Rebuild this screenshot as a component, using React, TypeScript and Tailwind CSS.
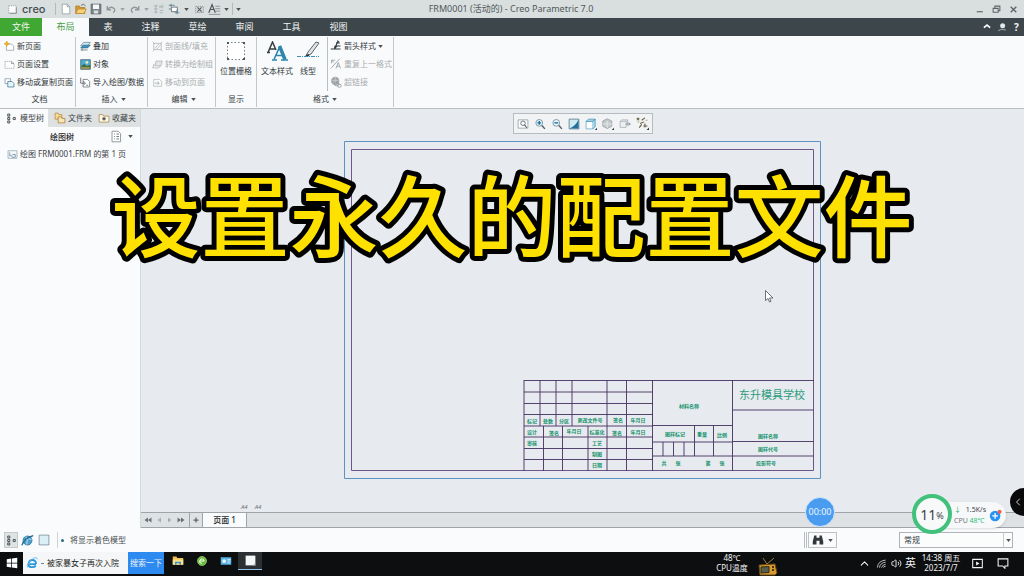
import type { ReactNode } from 'react';
import { ChevronLeft, ChevronUp, Volume2 } from 'lucide-react';

interface IconProps {
  children: ReactNode;
  size?: number;
  box?: number;
}

// All hand-drawn icons share a 16 unit grid
function Icon({ children, size = 11, box = 16 }: IconProps) {
  return (
    <svg width={size} height={size} viewBox={`0 0 ${box} ${box}`} fill="none" stroke="#5b6468" className="shrink-0" aria-hidden="true">
      {children}
    </svg>
  );
}

function Caret({ color = '#4a5053' }: { color?: string }) {
  return (
    <svg width="5" height="3" viewBox="0 0 6 4" className="shrink-0" aria-hidden="true">
      <path d="M0 0h6L3 4z" fill={color} />
    </svg>
  );
}

const icons = {
  page: (
    <Icon>
      <path d="M2.500 2.500h11v11h-11z" fill="#fbfbfb" stroke="#8d979c" strokeDasharray="2 1" />
      <path d="M4 13.500h9.500V5" stroke="#6c767b" />
    </Icon>
  ),
  newFile: (
    <Icon size={12}>
      <path d="M3 1.500h6.500L13 5v9.500H3z" fill="#fff" stroke="#8b9499" />
      <path d="M9.500 1.500V5H13" stroke="#8b9499" />
    </Icon>
  ),
  open: (
    <Icon size={12}>
      <path d="M1 4h5l1 2h6v8H1z" fill="#d69a35" stroke="#a87821" />
      <path d="M1 14l3-6h11l-3 6z" fill="#f7d078" stroke="#b58630" />
      <path d="M8 3q4-3 6 1" stroke="#4c5254" />
    </Icon>
  ),
  save: (
    <Icon size={12}>
      <path d="M1.500 1.500h13v13h-13z" fill="#7b858b" stroke="#535d62" />
      <path d="M4 2h8v6H4z" fill="#f4f6f7" stroke="none" />
      <path d="M5 10h6v4H5z" fill="#d9dee0" stroke="none" />
    </Icon>
  ),
  undo: (
    <Icon size={12}>
      <path d="M3 4v5h5M3 9q4-5 8-2.500t0 6.500" stroke="#8e979b" strokeWidth="1.800" />
    </Icon>
  ),
  redo: (
    <Icon size={12}>
      <path d="M13 4v5H8M13 9q-4-5-8-2.500t0 6.500" stroke="#8e979b" strokeWidth="1.800" />
    </Icon>
  ),
  regen: (
    <Icon size={12}>
      <path d="M4 2v12M1 4h5M1 8h5M1 12h5" stroke="#a2aaad" />
      <path d="M8 4h3v3M11 4l-3 3M13 2v5M9 10h5M9 13h4" stroke="#a2aaad" />
    </Icon>
  ),
  windows: (
    <Icon size={12}>
      <path d="M4.500 5.500h8v6h-8z" fill="#fff" stroke="#4f5a5f" />
      <path d="M1 3h8M4 1v4M12 9v6M9 13h6M1 8h3" stroke="#48718c" />
    </Icon>
  ),
  close: (
    <Icon size={11}>
      <path d="M2.500 3.500h11v9h-11z" stroke="#737d82" strokeDasharray="2 1" />
      <path d="M5 5l6 6M11 5l-6 6" stroke="#4f595e" strokeWidth="1.600" />
    </Icon>
  ),
  textFormat: (
    <Icon size={13}>
      <path d="M1 12L5 2l4 10M3 8h4" stroke="#4d575c" strokeWidth="1.500" />
      <path d="M9 4h6M9 7h6M9 10h6M1 14h14" stroke="#7e888c" />
    </Icon>
  ),
  newPage: (
    <Icon>
      <path d="M3.500 4.500H11l3 3v6H3.500z" fill="#fff" stroke="#8c969b" />
      <path d="M4 0l1 3 3 1-3 1-1 3-1-3-3-1 3-1z" fill="#f2b524" stroke="#e0a010" />
    </Icon>
  ),
  pageSetup: (
    <Icon>
      <path d="M1.500 3.500H11l3.500 3v7h-13z" fill="#fff" stroke="#8c969b" strokeDasharray="2 1" />
      <path d="M11 3.500v3h3.500" stroke="#6f7a80" />
    </Icon>
  ),
  movePage: (
    <Icon>
      <path d="M1.500 2.500h8v7h-8z" fill="#fff" stroke="#708c9c" />
      <path d="M5.500 6.500h6l3 3v5h-9z" fill="#e6f5fc" stroke="#356d8b" />
    </Icon>
  ),
  overlay: (
    <Icon>
      <path d="M5 2h10l-4 5H1z" fill="#d7e8f0" stroke="#547c91" />
      <path d="M5 6h10l-4 4H1z" fill="#3f96be" stroke="#2c6986" />
      <path d="M1 13h10M3 10v4" stroke="#566269" />
    </Icon>
  ),
  picture: (
    <Icon>
      <path d="M1 1h14v14H1z" fill="#4cafd6" stroke="#3c5058" />
      <path d="M2 10l4-3 4 3 5-2v6H2z" fill="#426e43" stroke="none" />
      <path d="M2 12h12v2H2z" fill="#c69c49" stroke="none" />
      <circle cx="10" cy="5" r="2" fill="#f6e5a2" stroke="none" />
    </Icon>
  ),
  importData: (
    <Icon>
      <path d="M4.500 3.500H11l3 3v8H4.500z" fill="#fff" stroke="#535e63" />
      <path d="M1 1v8h6M5 6l3 3-3 3M9 12h3" stroke="#3e494e" />
    </Icon>
  ),
  hatch: (
    <Icon>
      <path d="M2.500 3.500h11v9h-11z" stroke="#a9aeb1" />
      <path d="M1 1l3 3M15 1l-3 3M1 15l3-3M15 15l-3-3M4 11l6-7M7 12l6-7" stroke="#a9aeb1" />
    </Icon>
  ),
  convert: (
    <Icon>
      <path d="M6 3h9l-2 7H4z" fill="#e4e6e7" stroke="#a9aeb1" />
      <path d="M3 7L1 13h9l2-3" stroke="#a9aeb1" />
    </Icon>
  ),
  moveTo: (
    <Icon>
      <path d="M2.500 3.500H11l3 3v7H2.500z" stroke="#b0b5b8" />
      <path d="M4 9h6M8 6.500L10.500 9 8 11.500" stroke="#969da0" />
    </Icon>
  ),
  arrowStyle: (
    <Icon size={12}>
      <path d="M1 12h5l4-9M6 12h8M6 8h8M8 4h5" stroke="#2e383c" strokeWidth="1.400" />
      <path d="M10 0l3 3-4 1zM5 9l5-1-3 4z" fill="#2e383c" stroke="none" />
    </Icon>
  ),
  repeatFormat: (
    <Icon size={12}>
      <path d="M1 14L13 1M2 3h5M2 3v4M2 3l3 3M8 14l3-8 3 8M9 11h4" stroke="#9ca3a6" strokeWidth="1.200" />
    </Icon>
  ),
  link: (
    <Icon size={12}>
      <circle cx="7" cy="6.500" r="5" fill="#a4aaac" stroke="#9ca2a5" />
      <path d="M3 6h8M7 2v9" stroke="#c6cacc" />
      <rect x="6" y="9" width="6" height="4" rx="2" stroke="#8b9396" />
      <rect x="10" y="11" width="5" height="4" rx="2" stroke="#8b9396" />
    </Icon>
  ),
  modelTree: (
    <Icon>
      <path d="M2.500 1.500h3v3h-3zM2.500 6.500h3v3h-3zM2.500 11.500h3v3h-3zM10.500 6.500h3v3h-3z" stroke="#3b4448" strokeWidth="1.300" />
    </Icon>
  ),
  folders: (
    <Icon size={12}>
      <path d="M1.500 1.500h4l1 2h4v6h-9z" fill="#f6dc9b" stroke="#b58734" />
      <path d="M5.500 6.500h4l1 2h4v6h-9z" fill="#f8e6b8" stroke="#a97b2b" />
    </Icon>
  ),
  favorites: (
    <Icon size={12}>
      <path d="M1.500 3.500h5l1 2h7v8h-13z" fill="#fdf6e2" stroke="#a98649" />
      <path d="M8 6.500v5M5.500 9h5M6.500 7.500l3 3M9.500 7.500l-3 3" stroke="#2d3538" />
    </Icon>
  ),
  treeList: (
    <Icon size={13}>
      <path d="M2.500 1.500H10l3 3v10H2.500z" fill="#fff" stroke="#7b858a" />
      <path d="M5 5h1M8 5h3M5 8h1M8 8h3M5 11h1M8 11h3" stroke="#4c575c" />
    </Icon>
  ),
  drawing: (
    <Icon>
      <path d="M1.500 2.500h13v11h-13z" fill="#f4f8fa" stroke="#8ba0ac" />
      <path d="M4 5v5h4M8 8h4v4H7" stroke="#54788b" />
    </Icon>
  ),
};

const viewIcons = [
  {
    label: '重新调整',
    art: (
      <Icon size={12}>
        <path d="M1.500 2.500h13v11h-13z" fill="#fff" stroke="#8b959a" />
        <circle cx="8" cy="7" r="3" stroke="#4a5357" />
        <path d="M10 9l3 4" stroke="#4a5357" strokeWidth="1.500" />
      </Icon>
    ),
  },
  {
    label: '放大',
    art: (
      <Icon size={12}>
        <circle cx="7" cy="6.500" r="4.500" fill="#e5f5fb" stroke="#66828f" />
        <path d="M4.500 6.500h5M7 4v5" stroke="#176da0" strokeWidth="1.800" />
        <path d="M10.500 10l4 4.500" stroke="#566369" strokeWidth="2" />
      </Icon>
    ),
  },
  {
    label: '缩小',
    art: (
      <Icon size={12}>
        <circle cx="7" cy="6.500" r="4.500" fill="#e5f5fb" stroke="#66828f" />
        <path d="M4.500 6.500h5" stroke="#176da0" strokeWidth="1.800" />
        <path d="M10.500 10l4 4.500" stroke="#566369" strokeWidth="2" />
      </Icon>
    ),
  },
  {
    label: '重画',
    art: (
      <Icon size={12}>
        <path d="M1.500 1.500h13v13h-13z" fill="#cfeaf4" stroke="#547080" />
        <path d="M14 2v12H2q8-3 12-12z" fill="#23709a" stroke="none" />
      </Icon>
    ),
  },
  {
    label: '显示样式',
    art: (
      <Icon size={12}>
        <path d="M1.500 4.500h9v10h-9z" fill="#fff" stroke="#5ca3c3" />
        <path d="M1.500 4.500l3-3h9l-3 3zM10.500 4.500l3-3v10l-3 3" fill="#a9dced" stroke="#4690b2" />
        <path d="M16 13v3h-3z" fill="#2f383c" stroke="none" />
      </Icon>
    ),
  },
  {
    label: '着色',
    art: (
      <Icon size={12}>
        <path d="M7 1l6 3v7l-6 3-6-3V4z" fill="#c4c9cb" stroke="#959c9f" />
        <path d="M1 8h12M7 4v9" stroke="#eef0f0" />
        <path d="M16 13v3h-3z" fill="#2f383c" stroke="none" />
      </Icon>
    ),
  },
  {
    label: '视图方向',
    art: (
      <Icon size={12}>
        <path d="M1.500 4.500h8v8h-8zM1.500 4.500l2-2h8l-2 2M11.500 2.500v8" fill="#edf0f1" stroke="#a4acaf" />
        <path d="M9 8h6M13 6l2 2-2 2" stroke="#727c80" />
      </Icon>
    ),
  },
  {
    label: '注释显示',
    art: (
      <Icon size={13}>
        <path d="M1 1l3 3M4 1L1 4M7 4l4-3M5 8l5-2M4 13l3-4M9 11h5M11 8v5" stroke="#665f43" strokeWidth="1.300" />
        <path d="M2 6h2M12 4h2" stroke="#a78531" />
        <path d="M16 13v3h-3z" fill="#2f383c" stroke="none" />
      </Icon>
    ),
  },
];

const tabs = ['注释', '草绘', '审阅', '工具', '视图'];

interface RibbonButtonProps {
  icon: ReactNode;
  label: string;
  disabled?: boolean;
  menu?: boolean;
}

function RibbonButton({ icon, label, disabled = false, menu = false }: RibbonButtonProps) {
  return (
    <button
      type="button"
      disabled={disabled}
      className={`flex h-[18px] items-center gap-[2px] whitespace-nowrap text-[8px] ${disabled ? 'text-[#a9adb0]' : 'text-[#33393c]'}`}
    >
      {icon}
      {label}
      {menu && <Caret />}
    </button>
  );
}

function RibbonGroup({ title, menu = false, width, children }: { title: string; menu?: boolean; width: string; children: ReactNode }) {
  return (
    <section className={`flex shrink-0 flex-col border-r border-[#c3c7ca] ${width}`}>
      <div className="h-[54px]">{children}</div>
      <div className="flex h-4 items-center justify-center gap-[3px] text-[8px] text-[#33393c]">
        {title}
        {menu && <Caret />}
      </div>
    </section>
  );
}

function TitleBar() {
  return (
    <header className="flex h-[18px] shrink-0 items-center bg-[#d9dfdf] text-[#3d4548]">
      <div className="flex flex-1 items-center">
        <div className="flex w-[58px] items-center gap-1 pl-[7px]">
          {icons.page}
          <span className="font-['Inter',sans-serif] text-[11px] font-medium leading-4 text-[#454d51]">creo</span>
          <span className="ml-auto mr-[2px] h-3 w-px bg-[#b3babb]" />
        </div>
        {[
          ['新建', icons.newFile],
          ['打开', icons.open],
          ['保存', icons.save],
          ['撤消', icons.undo],
        ].map(([label, art]) => (
          <button key={label as string} type="button" aria-label={label as string} className="flex w-[15px] justify-center">{art}</button>
        ))}
        <span className="flex w-[9px] justify-center"><Caret color="#9aa2a4" /></span>
        <button type="button" aria-label="重做" className="flex w-[15px] justify-center">{icons.redo}</button>
        <span className="flex w-[9px] justify-center"><Caret color="#9aa2a4" /></span>
        <button type="button" aria-label="重新生成" className="flex w-[15px] justify-center">{icons.regen}</button>
        <button type="button" aria-label="窗口" className="flex w-[15px] justify-center">{icons.windows}</button>
        <span className="flex w-[11px] justify-center"><Caret /></span>
        <button type="button" aria-label="关闭窗口" className="flex w-[15px] justify-center">{icons.close}</button>
        <button type="button" aria-label="文本格式" className="flex w-[15px] justify-center">{icons.textFormat}</button>
        <span className="flex w-[9px] justify-center"><Caret /></span>
        <span className="mx-px h-3 w-px bg-[#b3babb]" />
        <button type="button" aria-label="自定义工具栏" className="flex w-[9px] justify-center"><Caret /></button>
      </div>
      <h1 className="whitespace-nowrap text-[9px] text-[#50585b]">FRM0001 (活动的) - Creo Parametric 7.0</h1>
      <div className="flex flex-1 justify-end pr-[2px]">
        <button type="button" aria-label="最小化" className="flex w-[17px] justify-center">
          <Icon size={9}><path d="M3 12h11" strokeWidth="2" /></Icon>
        </button>
        <button type="button" aria-label="还原" className="flex w-[17px] justify-center">
          <Icon size={9}><path d="M2 6h9v7H2zM5 6V2h9v8h-3" strokeWidth="1.800" /></Icon>
        </button>
        <button type="button" aria-label="关闭" className="flex w-[17px] justify-center">
          <Icon size={9}><path d="M3 3l10 10M13 3L3 13" strokeWidth="2.400" /></Icon>
        </button>
      </div>
    </header>
  );
}

function TabBar() {
  return (
    <nav className="flex h-[18px] shrink-0 items-stretch bg-[#3d474b] text-[9px] text-[#f1f4f4]">
      <button type="button" className="w-[42px] bg-[#40a832]">文件</button>
      <button type="button" className="w-[47px] bg-[#f8fafb] text-[#4c9c48]">布局</button>
      <button type="button" className="w-[38px]">表</button>
      {tabs.map((tab) => (
        <button key={tab} type="button" className="w-[47px]">{tab}</button>
      ))}
      <div className="ml-auto flex items-center">
        <button type="button" aria-label="折叠功能区" className="flex w-[15px] justify-center">
          <Icon size={10}><path d="M3 9l5-4 5 4" stroke="#fff" strokeWidth="2.600" /></Icon>
        </button>
        <button type="button" aria-label="账户" className="flex w-[15px] justify-center">
          <Icon size={10}>
            <circle cx="9" cy="6" r="4" fill="#e3e8e8" stroke="none" />
            <path d="M2 14q5-4 12-1" stroke="#8d999c" strokeWidth="2" />
          </Icon>
        </button>
        <button type="button" aria-label="帮助" className="w-[15px] text-[10px] font-bold">?</button>
      </div>
    </nav>
  );
}

function Ribbon() {
  return (
    <div className="flex h-[73px] shrink-0 border-b border-[#b9bec1] bg-[#f8fafb] pb-px pt-px">
      <RibbonGroup title="文档" width="w-[76px] pl-1">
        <RibbonButton icon={icons.newPage} label="新页面" />
        <RibbonButton icon={icons.pageSetup} label="页面设置" />
        <RibbonButton icon={icons.movePage} label="移动或复制页面" />
      </RibbonGroup>
      <RibbonGroup title="插入" menu width="w-[72px] pl-1">
        <RibbonButton icon={icons.overlay} label="叠加" />
        <RibbonButton icon={icons.picture} label="对象" />
        <RibbonButton icon={icons.importData} label="导入绘图/数据" />
      </RibbonGroup>
      <RibbonGroup title="编辑" menu width="w-[68px] pl-1">
        <RibbonButton icon={icons.hatch} label="剖面线/填充" disabled />
        <RibbonButton icon={icons.convert} label="转换为绘制组" disabled />
        <RibbonButton icon={icons.moveTo} label="移动到页面" disabled />
      </RibbonGroup>
      <RibbonGroup title="显示" width="w-[41px]">
        <button type="button" className="flex w-full flex-col items-center gap-1 whitespace-nowrap pt-1 text-[8px] text-[#33393c]">
          <Icon size={20} box={20}>
            <path d="M1.500 1.500h17v17h-17z" fill="#fff" stroke="#777f83" strokeDasharray="1.500 2" />
            <path d="M1 1h2v2H1zM17 1h2v2h-2zM1 17h2v2H1zM17 17h2v2h-2z" fill="#4b5458" stroke="none" />
          </Icon>
          位置栅格
        </button>
      </RibbonGroup>
      <RibbonGroup title="格式" menu width="w-[137px]">
        <div className="flex">
          <button type="button" className="flex w-[40px] flex-col items-center gap-[2px] whitespace-nowrap pt-1 text-[8px] text-[#33393c]">
            <Icon size={22} box={22}>
              <path d="M2 11.500L6.500 1 10 9M4 8h5M1 11.500h3" stroke="#363f43" strokeWidth="1.500" />
              <path d="M8 18.500L14 5M10.500 14.500h7" stroke="#2c86ab" strokeWidth="1.600" />
              <path d="M13.500 5l5.500 13.500" stroke="#2c86ab" strokeWidth="3.500" />
              <path d="M6 19h5M15 19h7" stroke="#2c86ab" strokeWidth="1.500" />
            </Icon>
            文本样式
          </button>
          <button type="button" className="flex w-[22px] flex-col items-center gap-[2px] whitespace-nowrap pt-1 text-[8px] text-[#33393c]">
            <Icon size={22} box={22}>
              <path d="M11 11L19 1l3 1-8 11-5 2z" fill="#e1e5e7" stroke="#596368" />
              <path d="M9 15l3-1" stroke="#2f383c" strokeWidth="2" />
              <path d="M0 15.500h22" stroke="#3790b5" strokeWidth="1.200" strokeDasharray="4 1 1 1" />
            </Icon>
            线型
          </button>
          <div className="ml-2 border-l border-[#b9bec1] pl-[2px]">
            <RibbonButton icon={icons.arrowStyle} label="箭头样式" menu />
            <RibbonButton icon={icons.repeatFormat} label="重复上一格式" disabled />
            <RibbonButton icon={icons.link} label="超链接" disabled />
          </div>
        </div>
      </RibbonGroup>
    </div>
  );
}

function Sidebar() {
  return (
    <aside className="flex w-[141px] shrink-0 flex-col border-r border-[#d3d8da] bg-[#fafbfc] text-[8px] text-[#3b4245]">
      <div className="flex h-[18px] shrink-0 bg-[#dde1e1]">
        <button type="button" className="flex w-12 items-center gap-[3px] whitespace-nowrap bg-[#fafbfc] pl-[6px]">
          {icons.modelTree}模型树
        </button>
        <button type="button" className="flex w-[46px] items-center gap-[2px] whitespace-nowrap pl-[6px]">
          {icons.folders}文件夹
        </button>
        <button type="button" className="flex flex-1 items-center gap-[2px] whitespace-nowrap pl-1">
          {icons.favorites}收藏夹
        </button>
      </div>
      <div className="flex h-[19px] shrink-0 items-center">
        <h2 className="flex-1 pl-[14px] text-center font-medium text-[#1f2527]">绘图树</h2>
        <button type="button" aria-label="树设置" className="flex items-center gap-[5px] pr-[7px]">
          {icons.treeList}
          <Caret />
        </button>
      </div>
      <button type="button" className="flex h-4 items-center gap-[2px] whitespace-nowrap pl-[7px]">
        {icons.drawing}绘图 FRM0001.FRM 的第 1 页
      </button>
    </aside>
  );
}

// Title block labels: x (centre), baseline, text
const blockLabels: [number, number, string][] = [
  [188, 282, '标记'], [204, 282, '处数'], [220, 282, '分区'], [246, 281, '更改文件号'], [274, 281, '签名'], [294, 281, '年月日'],
  [188, 293, '设计'], [210, 294, '签名'], [230, 292, '年月日'], [253, 293, '标准化'], [273, 294, '签名'], [294, 293, '年月日'],
  [188, 304, '审核'], [253, 304, '工艺'], [253, 315, '制图'], [253, 326, '日期'],
  [345, 267, '材料名称'], [331, 295, '图样标记'], [358, 295, '重量'], [378, 296, '比例'],
  [320, 324, '共'], [334, 324, '张'], [364, 324, '第'], [378, 324, '张'],
  [424, 297, '图样名称'], [424, 310, '图样代号'], [422, 324, '投影符号'],
];

const blockLines =
  'M180 239.500h290M180 251h129M180 262.500h129M180 273.500h129M180 285h129M180 296h129M180 307.500h129M180 318.500h129' +
  'M180 239v91M196 239v46M212 239v46M228 239v46M263 239v91M282.500 239v91M308.500 239v91' +
  'M199.500 285v45M218.500 285v45M244 285v45' +
  'M308.500 284.500h80M308.500 301h80M308.500 315h80M350.500 284.500v30.500M369.500 284.500v30.500M319 301v14M329.500 301v14M340 301v14' +
  'M388.500 239v91M388.500 269h81M388.500 300.500h81M388.500 315h81';

function DrawingSheet() {
  return (
    <svg width="478" height="339" viewBox="0 0 478 339" className="mt-[7px] shrink-0" role="img" aria-label="FRM0001 图框">
      <path d="M.5.5h476v337H.5z" fill="none" stroke="#5f92c4" />
      <path d="M7.500 8.500h462v321h-462z" fill="none" stroke="#6d5489" />
      <path d={blockLines} fill="none" stroke="#44305f" strokeWidth=".9" />
      <g fill="#13926c" fontSize="5" fontWeight="700" textAnchor="middle">
        {blockLabels.map(([x, y, text]) => (
          <text key={`${x}-${y}`} x={x} y={y}>{text}</text>
        ))}
      </g>
      <text x="428" y="258" fill="#2c9c7d" fontSize="11" textAnchor="middle">东升模具学校</text>
    </svg>
  );
}

function Canvas() {
  return (
    <main className="flex min-w-0 flex-1 flex-col bg-[#e7eaee]">
      <div className="flex flex-1 flex-col items-center pt-1">
        <div role="toolbar" aria-label="图形工具栏" className="flex h-[21px] shrink-0 items-center border border-[#b6bbbf] bg-[#f1f3f5] px-px">
          {viewIcons.map(({ label, art }) => (
            <button key={label} type="button" aria-label={label} className="flex w-[17px] justify-center">{art}</button>
          ))}
        </div>
        <DrawingSheet />
      </div>
      <div className="flex h-[9px] shrink-0 items-center gap-[7px] pl-[100px] text-[6px] italic text-[#6d7376]">
        <span>A4</span>
        <span>A4</span>
      </div>
      <div className="flex h-4 shrink-0 items-stretch border-y border-[#9ea4a8] bg-[#dfe2e4] text-[#6a7276]">
        <div className="flex items-center border-r border-[#9ea4a8] pl-px">
          {[
            ['首页', 'M8 3v10L1 8zM15 3v10L8 8z', '#6a7276'],
            ['上一页', 'M12 3v10L5 8z', '#a9afb2'],
            ['下一页', 'M4 3v10l7-5z', '#a9afb2'],
            ['末页', 'M1 3v10l7-5zM8 3v10l7-5z', '#6a7276'],
          ].map(([label, d, fill]) => (
            <button key={label} type="button" aria-label={label} className="flex w-[11px] justify-center">
              <Icon size={8}><path d={d} fill={fill} stroke="none" /></Icon>
            </button>
          ))}
          <span className="w-[3px]" />
        </div>
        <button type="button" aria-label="新建页面" className="flex w-[13px] items-center justify-center border-r border-[#9ea4a8]">
          <Icon size={8}><path d="M8 3v10M3 8h10" strokeWidth="2.500" /></Icon>
        </button>
        <button type="button" className="w-11 border-r border-[#9ea4a8] bg-[#fafbfc] text-[8px] font-medium text-[#24292b]">页面 1</button>
      </div>
    </main>
  );
}

function StatusBar() {
  return (
    <footer className="flex h-6 shrink-0 items-center bg-[#fafbfc] text-[8px] text-[#484f52]">
      <button type="button" aria-label="模型树" className="ml-1 flex h-4 w-[14px] items-center justify-center border border-[#c4c9cb] bg-[#dfe3e4]">
        {icons.modelTree}
      </button>
      <button type="button" aria-label="浏览器" className="ml-[3px] flex">
        <Icon size={13}>
          <circle cx="8" cy="8" r="5.500" fill="#4da0cb" stroke="#2873a0" />
          <path d="M3 9q5-5 10-2M6 3q3 5 1 10" stroke="#d9effa" />
          <path d="M1 14Q4 5 15 2" stroke="#1f658f" strokeWidth="1.500" />
        </Icon>
      </button>
      <button type="button" aria-label="全屏" className="ml-1 flex">
        <Icon size={12}><path d="M1.500 1.500h13v13h-13z" fill="#dceff7" stroke="#6e8895" /></Icon>
      </button>
      <span className="ml-[7px] h-4 w-px bg-[#d0d4d6]" />
      <span className="ml-[3px] size-[3px] rounded-full bg-[#2a6b84]" />
      <p className="ml-[6px]">将显示着色模型</p>
      <div className="ml-auto flex h-4 gap-px">
        <span className="w-px bg-[#b8bdc0]" />
        <span className="w-px bg-[#b8bdc0]" />
        <button type="button" aria-label="查找" className="flex w-[29px] items-center justify-between border border-[#bcc1c4] bg-[#fafbfc] pl-[3px] pr-[3px]">
          <Icon size={12}>
            <path d="M3 2h3v3h4V2h3l2 8v4h-5V9H6v5H1v-4z" fill="#30383b" stroke="none" />
          </Icon>
          <Caret />
        </button>
      </div>
      <div className="ml-[62px] mr-[11px] grid w-[114px] items-center">
        <select aria-label="选择过滤器" className="col-start-1 row-start-1 h-4 w-full appearance-none border border-[#aeb4b7] bg-[#fbfcfc] pl-1 text-[8px] text-[#33393c]">
          <option>常规</option>
        </select>
        <span className="pointer-events-none col-start-1 row-start-1 flex h-[14px] w-[10px] items-center justify-center justify-self-end border-l border-[#c8cccf]">
          <Caret />
        </span>
      </div>
    </footer>
  );
}

function Taskbar() {
  return (
    <footer className="flex h-6 shrink-0 items-start bg-[#0d0e10] text-[8px] text-[#f2f4f5]">
      <button type="button" aria-label="开始" className="flex h-[22px] w-[23px] items-center justify-center">
        <Icon size={12}>
          <path d="M1 3l6-1v5.500H1zM8 2l7-1v6.500H8zM1 8.500h6V14l-6-1zM8 8.500h7V15l-7-1z" fill="#fff" stroke="none" />
        </Icon>
      </button>
      <form className="flex h-[22px] items-stretch" onSubmit={(e) => e.preventDefault()}>
        <div className="flex w-[105px] items-center gap-[3px] bg-[#f5f6f8] pl-[3px]">
          <Icon size={12}>
            <path d="M13.500 9.500H5M13.500 9.500Q13 4 8.500 4T3.500 9t5 4.500q3 0 4.500-2" stroke="#2b96e0" strokeWidth="2.400" />
            <path d="M2 14Q0 10 7 4t8-1" stroke="#5bb7ee" strokeWidth="1.200" />
          </Icon>
          <span className="h-px w-[3px] bg-[#7a8184]" />
          <input aria-label="搜索" defaultValue="被家暴女子再次入院" className="w-[80px] bg-transparent text-[8px] text-[#1b1f21] outline-none" />
        </div>
        <button type="submit" className="w-9 whitespace-nowrap bg-[#2d8af0] text-[8px]">搜索一下</button>
      </form>
      <div className="ml-[2px] flex h-[22px] items-stretch">
        <button type="button" aria-label="文件资源管理器" className="flex w-6 items-center justify-center pb-1">
          <Icon size={12}>
            <path d="M1 2h5l1 2h8v9H1z" fill="#edc04f" stroke="none" />
            <path d="M1 6h14v7H1z" fill="#fbe08b" stroke="none" />
            <path d="M4 9h8v4h-2v-2H6v2H4z" fill="#3d8fc6" stroke="none" />
          </Icon>
        </button>
        <button type="button" aria-label="安全浏览器" className="flex w-6 items-center justify-center pb-1">
          <Icon size={12}>
            <circle cx="8" cy="8" r="6" fill="#63b83f" stroke="#a5d46c" />
            <path d="M5 8h6M11 8Q10 5 8 5T5 8t3 3" stroke="#eefbe2" strokeWidth="1.500" />
          </Icon>
        </button>
        <button type="button" aria-label="控制面板" className="flex w-6 items-center justify-center pb-1">
          <Icon size={12}>
            <path d="M1 3h14v10H1z" fill="#58b3e6" stroke="none" />
            <circle cx="5.500" cy="8" r="2.500" fill="#e9f6fd" stroke="none" />
            <path d="M10 6h4M10 8h4M10 10.500h3" stroke="#f3fafe" />
          </Icon>
        </button>
        <button type="button" aria-label="Creo" className="mb-1 flex w-6 items-center justify-center border-b border-[#8fc4e8] bg-[#2c3033]">
          <Icon size={13}>
            <path d="M2 2h12v12H2z" fill="#f5f6f6" stroke="none" />
            <path d="M11 14l3-3v3z" fill="#a1a8ab" stroke="none" />
          </Icon>
        </button>
      </div>
      <div className="ml-auto flex h-[22px] items-center">
        <p className="w-10 text-center leading-[10px]">48℃<br />CPU温度</p>
        <span className="ml-1 flex w-6 justify-center pt-2">
          <Icon size={20} box={20}>
            <path d="M9 7L5 1M9 7l7-6" stroke="#9b7d3e" />
            <path d="M1 8l16-1 2 9-2 2H2z" fill="#d69a2f" stroke="#694a16" />
            <path d="M3 10l8-.5v6L3 16z" fill="#53604e" stroke="#34281a" />
            <path d="M14 10h2M14 13h2" stroke="#4d350f" strokeWidth="2" />
          </Icon>
        </span>
        <ChevronUp size={13} className="ml-[78px]" />
        <span className="ml-[5px]">
          <Icon size={11}>
            <path d="M2 14Q3 4 14 3M5 14q1-7 9-8M8 14q1-4 6-5M11 14q0-2 3-2" stroke="#d8dddf" strokeWidth="1.200" />
          </Icon>
        </span>
        <Volume2 size={11} className="ml-1" />
        <span className="ml-[3px] text-[11px]">英</span>
        <p className="ml-[2px] w-[46px] whitespace-nowrap text-center leading-[10px]">14:38 周五<br />2023/7/7</p>
        <span className="ml-[8px]">
          <Icon size={11}>
            <path d="M1 2h14v12H1z" stroke="#f2f4f5" strokeWidth="1.500" />
            <path d="M6 5v6l5-3z" fill="#f2f4f5" stroke="none" />
          </Icon>
        </span>
        <button type="button" aria-label="通知" className="ml-[14px] mr-[15px] flex">
          <Icon size={12}>
            <path d="M1.500 2.500h13v9.500h-4v3l-3-3h-6z" stroke="#f2f4f5" strokeWidth="1.400" />
          </Icon>
        </button>
      </div>
    </footer>
  );
}

function Overlays() {
  return (
    <>
      {/* Caption, outlined with rounded corners */}
      <svg width="840" height="120" viewBox="0 0 840 120" className="pointer-events-none absolute left-1/2 top-[158px] -translate-x-1/2 overflow-visible">
        <text
          x="420"
          y="92"
          textAnchor="middle"
          className="font-['Noto_Sans_CJK_SC',sans-serif] text-[89px] font-medium"
          fill="#ffe100"
          stroke="#000"
          strokeWidth="10"
          strokeLinejoin="round"
          paintOrder="stroke"
        >
          设置永久的配置文件
        </text>
      </svg>

      {/* Mouse pointer */}
      <svg width="9" height="13" viewBox="0 0 9 13" className="absolute left-[765px] top-[290px]" aria-hidden="true">
        <path d="M.5.5v10l2.500-2 1.500 3.500 1.500-.7L4.500 8h3.500z" fill="#fff" stroke="#4b5154" strokeWidth=".8" />
      </svg>

      {/* Recording timer */}
      <div className="absolute bottom-[49px] right-[189px] flex size-[30px] items-center justify-center rounded-full border border-[#cfe5fa] bg-[#4a9cf0] text-[9px] text-[#eaf5ff]">
        00:00
      </div>

      {/* System monitor */}
      <div className="absolute bottom-[48px] right-[18px] flex h-[26px] w-[76px] items-center justify-end gap-[3px] rounded-full bg-[#f7f8f9] pr-1 shadow-sm">
        <div className="w-[32px] text-[7px] leading-[11px] text-[#3e4548]">
          <div className="flex justify-between">
            <span className="text-[#23b26a]">↓</span>
            <span>1.5K/s</span>
          </div>
          <div className="whitespace-nowrap text-[#70777a]">CPU <span className="text-[#2fc17b]">48℃</span></div>
        </div>
        <Icon size={13}>
          <circle cx="7.500" cy="8.500" r="6.500" fill="#2493f2" stroke="none" />
          <path d="M7.500 5v7M4 8.500h7" stroke="#fff" strokeWidth="1.600" />
          <circle cx="13" cy="3.500" r="2.500" fill="#f0614a" stroke="none" />
        </Icon>
      </div>
      <div className="absolute bottom-[42px] right-[72px] flex size-10 items-center justify-center rounded-full border-4 border-[#41c17c] bg-[#f8faf9] text-[14px] text-[#3e4548]">
        11<span className="pt-1 text-[9px]">%</span>
      </div>

      {/* Half hidden drawer handle */}
      <div className="absolute bottom-[60px] right-0 flex h-7 w-[14px] items-center justify-end rounded-l-full bg-[#0a0a0b]">
        <ChevronLeft size={12} className="text-[#c9cccd]" />
      </div>
    </>
  );
}

export default function App() {
  return (
    <div className="relative flex h-screen min-h-[540px] flex-col overflow-hidden font-['Noto_Sans','Noto_Sans_CJK_SC',sans-serif] leading-normal">
      <TitleBar />
      <TabBar />
      <Ribbon />
      <div className="flex min-h-0 flex-1">
        <Sidebar />
        <Canvas />
      </div>
      <StatusBar />
      <Taskbar />
      <Overlays />
    </div>
  );
}
